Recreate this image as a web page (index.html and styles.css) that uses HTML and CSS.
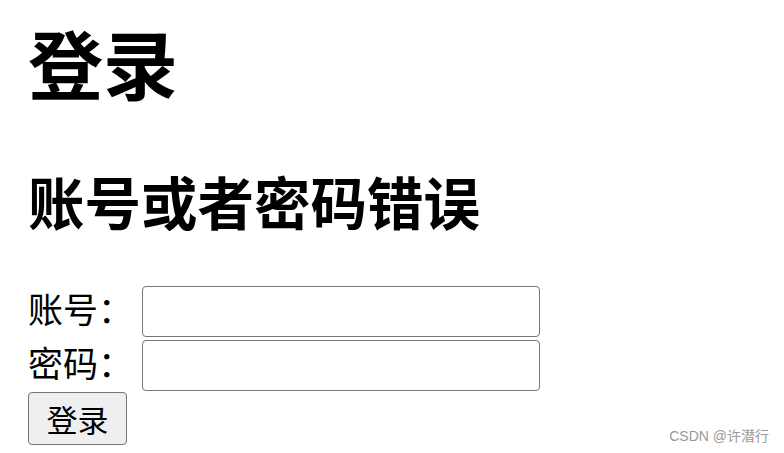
FILE: index.html
```html
<!DOCTYPE html>
<html lang="zh">
<head>
<meta charset="utf-8">
<title>登录</title>
<link rel="stylesheet" href="styles.css">
</head>
<body>
<div class="page">
  <h1 class="title">登录</h1>
  <h2 class="error">账号或者密码错误</h2>
  <form class="form">
    <div class="row"><label class="label">账号：</label><input class="field" type="text"></div>
    <div class="row"><label class="label">密码：</label><input class="field" type="password"></div>
    <button class="btn" type="button">登录</button>
  </form>
</div>
<div class="watermark">CSDN @许潜行</div>
</body>
</html>
```
FILE: styles.css
```css
html, body {
  margin: 0;
  padding: 0;
  background: #fff;
}
body {
  font-family: "Noto Sans CJK SC", "Noto Sans", sans-serif;
  color: #000;
  width: 784px;
  height: 453px;
  overflow: hidden;
  position: relative;
}
.page {
  padding: 19px 0 0 28px;
}
.title {
  margin: 0;
  font-size: 75px;
  line-height: 86px;
  font-weight: 700;
}
.error {
  margin: 62px 0 0 0;
  font-size: 56.5px;
  line-height: 67px;
  font-weight: 700;
}
.form {
  margin: 50px 0 0 0;
  display: flex;
  flex-direction: column;
  align-items: flex-start;
}
.row {
  display: flex;
  align-items: center;
  height: 54px;
}
.label {
  font-size: 35px;
  line-height: 48px;
  padding-bottom: 6px;
  width: 114px;
}
.field {
  width: 398px;
  height: 51px;
  box-sizing: border-box;
  border: 1px solid #767676;
  border-radius: 4px;
  margin: 0;
  padding: 0 4px;
  background: #fff;
}
.btn {
  margin: 0;
  width: 99px;
  height: 53px;
  box-sizing: border-box;
  border: 1px solid #767676;
  border-radius: 4px;
  background: #efefef;
  font-family: "Noto Sans CJK SC", sans-serif;
  font-size: 31px;
  line-height: 1;
  padding: 0;
  color: #000;
}
.watermark {
  position: absolute;
  right: 15px;
  bottom: 8px;
  font-family: "Liberation Sans", "Noto Sans CJK SC", sans-serif;
  font-size: 14px;
  color: #999;
}
```
